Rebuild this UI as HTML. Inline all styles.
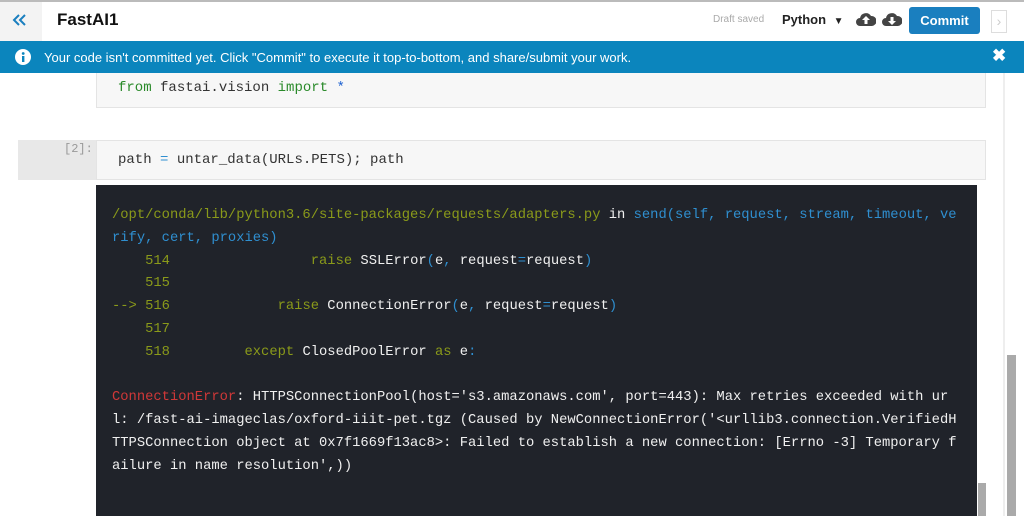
<!DOCTYPE html>
<html><head><meta charset="utf-8"><style>
*{margin:0;padding:0;box-sizing:border-box}
html,body{width:1024px;height:516px;overflow:hidden}
body{background:#fff;font-family:"Liberation Sans",sans-serif;position:relative}
.abs{position:absolute}
.mono{font-family:"Liberation Mono",monospace;font-size:14px;white-space:pre}
.tb{white-space:normal;font-size:13.8px}
.tb div{height:22.8px;line-height:22.8px;white-space:pre}
.y{color:#8a9a1a}.b{color:#2f8fd0}.w{color:#f0f0f0}.r{color:#d03838}.g{color:#2a8a2a}
</style></head><body>
<div class="abs" style="left:0;top:0;width:1024px;height:2px;background:#bbb"></div>
<div class="abs" style="left:0;top:2px;width:42px;height:39px;background:#f3f3f3"></div>
<svg class="abs" style="left:12px;top:13px" width="16" height="14" viewBox="0 0 16 14"><path d="M7 2 L2 7 L7 12 M13 2 L8 7 L13 12" stroke="#1a7fbf" stroke-width="2" fill="none"/></svg>
<div class="abs" style="left:57px;top:10px;font-size:17px;font-weight:bold;color:#111">FastAI1</div>
<div class="abs" style="left:713px;top:14px;font-size:10px;color:#aaa">Draft saved</div>
<div class="abs" style="left:782px;top:12px;font-size:13px;font-weight:bold;color:#222">Python <span style="font-size:10px;margin-left:4px">▼</span></div>
<svg class="abs" style="left:856px;top:11px" width="20" height="16" viewBox="0 0 20 16"><path d="M4 15 A4 4 0 0 1 4 7 A6 6 0 0 1 15 5 A5 5 0 0 1 16 15 Z" fill="#444"/><path d="M10 5 L6 9 H8.5 V13 H11.5 V9 H14 Z" fill="#fff"/></svg>
<svg class="abs" style="left:882px;top:11px" width="20" height="16" viewBox="0 0 20 16"><path d="M4 15 A4 4 0 0 1 4 7 A6 6 0 0 1 15 5 A5 5 0 0 1 16 15 Z" fill="#444"/><path d="M10 14 L6 10 H8.5 V6 H11.5 V10 H14 Z" fill="#fff"/></svg>
<div class="abs" style="left:909px;top:7px;width:71px;height:27px;background:#1a7fbf;border-radius:3px;color:#fff;font-size:13px;font-weight:bold;text-align:center;line-height:27px">Commit</div>
<div class="abs" style="left:991px;top:10px;width:16px;height:23px;border:1px solid #ddd;color:#ccc;font-size:14px;text-align:center;line-height:21px">›</div>
<div class="abs" style="left:1003px;top:73px;width:2px;height:443px;background:#eee"></div>
<div class="abs" style="left:0;top:41px;width:1024px;height:32px;background:#0b85bd"></div>
<svg class="abs" style="left:15px;top:49px" width="16" height="16" viewBox="0 0 16 16"><circle cx="8" cy="8" r="8" fill="#fff"/><rect x="7" y="7" width="2.4" height="6" fill="#0b85bd"/><circle cx="8.2" cy="4.5" r="1.4" fill="#0b85bd"/></svg>
<div class="abs" style="left:44px;top:50px;font-size:13px;color:#fff">Your code isn't committed yet. Click "Commit" to execute it top-to-bottom, and share/submit your work.</div>
<div class="abs" style="left:992px;top:46px;font-size:17px;font-weight:bold;color:#fff">✖</div>
<div class="abs" style="left:96px;top:73px;width:890px;height:35px;background:#f7f7f7;border:1px solid #e4e4e4;border-top:none"></div>
<div class="abs mono" style="left:118px;top:80px;color:#333"><span class="g">from</span> fastai.vision <span class="g">import</span> <span style="color:#1a5fd0">*</span></div>
<div class="abs" style="left:18px;top:140px;width:78px;height:40px;background:#e8e8e8"></div>
<div class="abs mono" style="left:64px;top:142px;font-size:12px;color:#999">[2]:</div>
<div class="abs" style="left:96px;top:140px;width:890px;height:40px;background:#f7f7f7;border:1px solid #e4e4e4"></div>
<div class="abs mono" style="left:118px;top:152px;color:#333">path <span class="b">=</span> untar_data(URLs.PETS); path</div>
<div class="abs" style="left:96px;top:185px;width:881px;height:331px;background:#20232a"></div>
<div class="abs" style="left:978px;top:483px;width:8px;height:33px;background:#aaa"></div>
<div class="abs" style="left:1007px;top:355px;width:9px;height:161px;background:#aaa"></div>
<div class="abs mono tb" style="left:112px;top:205px;color:#f0f0f0"><div><span class="y">/opt/conda/lib/python3.6/site-packages/requests/adapters.py</span> <span class="w">in</span> <span class="b">send(self, request, stream, timeout, ve</span></div><div class="b">rify, cert, proxies)</div><div><span class="y">    514</span>                 <span class="y">raise</span> SSLError<span class="b">(</span>e<span class="b">,</span> request<span class="b">=</span>request<span class="b">)</span></div><div><span class="y">    515</span></div><div><span class="y">--&gt; 516</span>             <span class="y">raise</span> ConnectionError<span class="b">(</span>e<span class="b">,</span> request<span class="b">=</span>request<span class="b">)</span></div><div><span class="y">    517</span></div><div><span class="y">    518</span>         <span class="y">except</span> ClosedPoolError <span class="y">as</span> e<span class="b">:</span></div><div></div><div><span class="r">ConnectionError</span>: HTTPSConnectionPool(host='s3.amazonaws.com', port=443): Max retries exceeded with ur</div><div>l: /fast-ai-imageclas/oxford-iiit-pet.tgz (Caused by NewConnectionError('&lt;urllib3.connection.VerifiedH</div><div>TTPSConnection object at 0x7f1669f13ac8&gt;: Failed to establish a new connection: [Errno -3] Temporary f</div><div>ailure in name resolution',))</div></div>
</body></html>
